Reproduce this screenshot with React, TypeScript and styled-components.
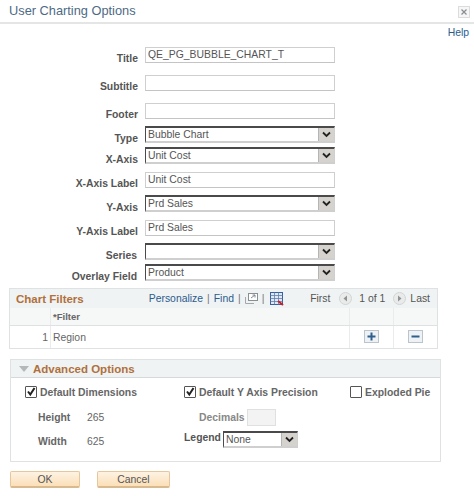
import React from "react";
import styled, { createGlobalStyle } from "styled-components";

const Global = createGlobalStyle`
  html, body { margin: 0; padding: 0; background: #fff; }
  body { font-family: "Liberation Sans", Arial, sans-serif; font-size: 10.4px; color: #555; }
`;

const Page = styled.div`
  width: 474px;
  height: 496px;
  overflow: hidden;
  display: flex;
  flex-direction: column;
`;

const TitleBar = styled.header`
  height: 22px;
  box-sizing: content-box;
  border-bottom: 2px solid #e4e6e6;
  display: flex;
  align-items: center;
  justify-content: space-between;
  padding: 0 4px 0 9px;
`;

const Heading = styled.h1`
  margin: 0 0 2px;
  font-size: 12.8px;
  font-weight: 400;
  color: #4d6a85;
`;

const CloseBox = styled.button`
  width: 12px;
  height: 12px;
  padding: 0;
  margin-top: 1px;
  border: 1px solid #dcdcdc;
  background: #f6f6f6;
  display: flex;
  align-items: center;
  justify-content: center;
`;

const HelpRow = styled.div`
  display: flex;
  justify-content: flex-end;
  padding: 3px 5px 0 0;
  height: 21px;
  box-sizing: border-box;
`;

const LinkText = styled.a`
  color: #2a5c8f;
  font-size: 10.4px;
`;

const Form = styled.div`
  display: grid;
  grid-template-columns: 138px 190px;
  column-gap: 7px;
  grid-auto-rows: auto;
  margin-top: 2px;
`;

const Label = styled.label<{ $offset?: number; $shift?: number }>`
  font-weight: 700;
  font-size: 10.4px;
  color: #555;
  text-align: right;
  align-self: end;
  margin-bottom: ${(p) => (p.$offset ?? 0) - 1}px;
  padding-right: ${(p) => p.$shift ?? 0}px;
`;

const TextField = styled.div<{ $gap: number }>`
  height: 16px;
  box-sizing: border-box;
  margin-bottom: ${(p) => p.$gap}px;
  border: 1px solid #cfcfcf;
  border-bottom-color: #c4c4c4;
  padding: 0 2px;
  font-size: 10.4px;
  line-height: 13px;
  color: #555;
  white-space: nowrap;
`;

const SelectBox = styled.div<{ $gap: number; $width?: number }>`
  height: 17px;
  width: ${(p) => (p.$width ? `${p.$width}px` : "auto")};
  box-sizing: border-box;
  margin-bottom: ${(p) => p.$gap}px;
  display: flex;
  border-top: 2px solid #4a4a4a;
  border-left: 1px solid #4a4a4a;
  border-right: 1px solid #cfcfcf;
  border-bottom: 2px solid #cfcfcf;
  font-size: 10.4px;
  font-weight: 400;
  line-height: 14px;
  color: #555;
  background: #fff;
`;

const SelectText = styled.span`
  flex: 1;
  padding-left: 2px;
  white-space: nowrap;
`;

const ArrowButton = styled.span`
  width: 15px;
  background: #d6d3ce;
  border-left: 1px solid #b5b5b5;
  display: flex;
  align-items: center;
  justify-content: center;
`;

const GridPanel = styled.section`
  margin: 7px 0 0 9px;
  width: 429px;
  height: 61px;
  box-sizing: border-box;
  border: 1px solid #dfe2e2;
  display: flex;
  flex-direction: column;
`;

const GridHeader = styled.div`
  height: 19px;
  background: #f0f3f3;
  display: flex;
  align-items: center;
  padding: 0 7px 0 6px;
`;

const PanelTitle = styled.span`
  font-size: 11.5px;
  font-weight: 700;
  color: #b0703c;
`;

const Nav = styled.div`
  margin-left: auto;
  display: flex;
  align-items: center;
  font-size: 10.4px;
  color: #555;
`;

const NavSep = styled.span`
  margin: 0 4px;
  color: #777;
`;

const Spacer = styled.span<{ $w: number }>`
  width: ${(p) => p.$w}px;
`;

const IconWrap = styled.svg`
  display: block;
  flex: none;
`;

const ColumnRow = styled.div<{ $head?: boolean }>`
  display: grid;
  grid-template-columns: 40px 1fr 44px 44px;
  height: ${(p) => (p.$head ? 17 : 23)}px;
  box-sizing: border-box;
  background: ${(p) => (p.$head ? "#f6f7f7" : "#fff")};
  border-top: ${(p) => (p.$head ? "none" : "1px solid #dfe2e2")};
`;

const Cell = styled.div<{ $align?: string; $bold?: boolean; $size?: number }>`
  display: flex;
  align-items: center;
  justify-content: ${(p) => p.$align ?? "flex-start"};
  border-left: 1px solid #eaecec;
  padding: 0 2px;
  font-weight: ${(p) => (p.$bold ? 700 : 400)};
  font-size: ${(p) => p.$size ?? 10.4}px;
  color: #666;
  &:first-child { border-left: none; }
`;

const RowButton = styled.span`
  width: 13px;
  height: 11px;
  margin-bottom: 2px;
  border: 1px solid #b9c4cc;
  background: #eef2f5;
  display: flex;
  align-items: center;
  justify-content: center;
`;

const Advanced = styled.section`
  margin: 10px 0 0 10px;
  width: 431px;
  height: 103px;
  box-sizing: border-box;
  border: 1px solid #dfe2e2;
  display: flex;
  flex-direction: column;
`;

const AdvancedHeader = styled.div`
  height: 18px;
  box-sizing: border-box;
  background: #f0f3f3;
  border-bottom: 1px solid #d5d9d9;
  display: flex;
  align-items: center;
  gap: 4px;
  padding-left: 8px;
`;

const Triangle = styled.span`
  width: 0;
  height: 0;
  border-left: 5px solid transparent;
  border-right: 5px solid transparent;
  border-top: 6px solid #b5b8ba;
`;

const OptionsGrid = styled.div`
  display: grid;
  grid-template-columns: 159px 166px auto;
  grid-template-rows: 25px 24px 24px;
  padding: 2px 0 0 14px;
`;

const CheckRow = styled.div`
  display: flex;
  align-items: center;
  gap: 3px;
  font-weight: 700;
  color: #666;
  font-size: 10.4px;
`;

const CheckBox = styled.span`
  width: 10px;
  height: 10px;
  border: 1px solid #555;
  border-radius: 1px;
  background: #fff;
  display: block;
  flex: none;
  position: relative;
  top: -1px;
`;

const Metric = styled.div`
  display: grid;
  grid-template-columns: 49px auto;
  align-items: center;
  padding-left: 13px;
  color: #666;
`;

const MetricName = styled.span`
  font-weight: 700;
`;

const DecimalRow = styled.div`
  display: flex;
  align-items: center;
  gap: 2px;
  padding-left: 15px;
  font-weight: 700;
  color: #888;
`;

const DisabledField = styled.span`
  width: 27px;
  height: 15px;
  background: #f3f3f3;
  border: 1px solid #e0e0e0;
`;

const LegendRow = styled.div`
  display: flex;
  align-items: flex-start;
  gap: 2px;
  padding-top: 2px;
  font-weight: 700;
  color: #555;
  line-height: 14px;
`;

const ButtonRow = styled.div`
  display: flex;
  gap: 17px;
  margin: 9px 0 0 10px;
`;

const ActionButton = styled.button<{ $w: number }>`
  width: ${(p) => p.$w}px;
  height: 17px;
  padding: 0;
  box-sizing: border-box;
  border: 1px solid #e6c79c;
  border-bottom: 2px solid #d9b98e;
  border-radius: 2px;
  background: linear-gradient(#fdf3e3, #fbdfb8);
  font-family: inherit;
  font-size: 10.4px;
  color: #555;
`;

const Chevron = () => (
  <IconWrap width="9" height="7" viewBox="0 0 9 7">
    <path d="M1 1.5 L4.5 5 L8 1.5" fill="none" stroke="#222" strokeWidth="1.8" />
  </IconWrap>
);

const Select = ({ text, gap, width }: { text: string; gap: number; width?: number }) => (
  <SelectBox $gap={gap} $width={width}>
    <SelectText>{text}</SelectText>
    <ArrowButton>
      <Chevron />
    </ArrowButton>
  </SelectBox>
);

const NavCircle = ({ dir }: { dir: "l" | "r" }) => (
  <IconWrap width="13" height="13" viewBox="0 0 13 13">
    <circle cx="6.5" cy="6.5" r="6" fill="#e9eaea" stroke="#d2d4d4" />
    <path d={dir === "l" ? "M8 3.5 L4.5 6.5 L8 9.5 Z" : "M5 3.5 L8.5 6.5 L5 9.5 Z"} fill="#8f9396" />
  </IconWrap>
);

const Check = ({ on }: { on: boolean }) => (
  <CheckBox>
    {on && (
      <IconWrap width="10" height="10" viewBox="0 0 10 10">
        <path d="M2 4.5 L4.3 7.5 L8.5 1" fill="none" stroke="#222" strokeWidth="2" />
      </IconWrap>
    )}
  </CheckBox>
);

export default function App() {
  return (
    <Page>
      <Global />
      <TitleBar>
        <Heading>User Charting Options</Heading>
        <CloseBox aria-label="Close">
          <IconWrap width="6" height="6" viewBox="0 0 6 6">
            <path d="M0.5 0.5 L5.5 5.5 M5.5 0.5 L0.5 5.5" stroke="#8a8f94" strokeWidth="1.3" />
          </IconWrap>
        </CloseBox>
      </TitleBar>
      <HelpRow>
        <LinkText>Help</LinkText>
      </HelpRow>
      <Form>
        <Label $offset={12}>Title</Label>
        <TextField $gap={12}>QE_PG_BUBBLE_CHART_T</TextField>
        <Label $offset={12}>Subtitle</Label>
        <TextField $gap={12}>{""}</TextField>
        <Label $offset={7}>Footer</Label>
        <TextField $gap={7}>{""}</TextField>
        <Label $offset={4}>Type</Label>
        <Select text="Bubble Chart" gap={4} />
        <Label $offset={8}>X-Axis</Label>
        <Select text="Unit Cost" gap={8} />
        <Label $offset={7}>X-Axis Label</Label>
        <TextField $gap={7}>Unit Cost</TextField>
        <Label $offset={8}>Y-Axis</Label>
        <Select text="Prd Sales" gap={8} />
        <Label $offset={7}>Y-Axis Label</Label>
        <TextField $gap={7}>Prd Sales</TextField>
        <Label $offset={4} $shift={1}>Series</Label>
        <Select text="" gap={4} />
        <Label $offset={0} $shift={1}>Overlay Field</Label>
        <Select text="Product" gap={0} />
      </Form>
      <GridPanel>
        <GridHeader>
          <PanelTitle>Chart Filters</PanelTitle>
          <Spacer $w={65} />
          <LinkText>Personalize</LinkText>
          <NavSep>|</NavSep>
          <LinkText>Find</LinkText>
          <NavSep>|</NavSep>
          <IconWrap width="13" height="11" viewBox="0 0 13 11">
            <rect x="3.5" y="0.5" width="9" height="7" fill="#fff" stroke="#8a8f94" />
            <path d="M0.5 4 V10.5 H9" fill="none" stroke="#a5a9ad" />
            <path d="M6 5 L10 2 M7.5 2 H10 V4.5" fill="none" stroke="#7f8a94" />
          </IconWrap>
          <NavSep>|</NavSep>
          <Spacer $w={2} />
          <IconWrap width="14" height="14" viewBox="0 0 14 14">
            <rect x="0.5" y="0.5" width="12" height="12" fill="#dfe8f3" stroke="#3a5f9e" />
            <path d="M0.5 3.5 H12.5 M0.5 6.5 H12.5 M0.5 9.5 H12.5 M4.5 0.5 V12.5 M8.5 0.5 V12.5" stroke="#5d7fb3" strokeWidth="0.8" />
            <path d="M8 9 L13 13" stroke="#c8202a" strokeWidth="2" />
          </IconWrap>
          <Nav>
            First
            <Spacer $w={9} />
            <NavCircle dir="l" />
            <Spacer $w={7} />
            1 of 1
            <Spacer $w={8} />
            <NavCircle dir="r" />
            <Spacer $w={4} />
            Last
          </Nav>
        </GridHeader>
        <ColumnRow $head>
          <Cell />
          <Cell $bold $size={9.5}>*Filter</Cell>
          <Cell />
          <Cell />
        </ColumnRow>
        <ColumnRow>
          <Cell $align="flex-end">1</Cell>
          <Cell>Region</Cell>
          <Cell $align="center">
            <RowButton>
              <IconWrap width="9" height="9" viewBox="0 0 9 9">
                <path d="M4.5 0.5 V8.5 M0.5 4.5 H8.5" stroke="#2f5f8f" strokeWidth="2" />
              </IconWrap>
            </RowButton>
          </Cell>
          <Cell $align="center">
            <RowButton>
              <IconWrap width="9" height="9" viewBox="0 0 9 9">
                <path d="M0.5 4.5 H8.5" stroke="#2f5f8f" strokeWidth="2" />
              </IconWrap>
            </RowButton>
          </Cell>
        </ColumnRow>
      </GridPanel>
      <Advanced>
        <AdvancedHeader>
          <Triangle />
          <PanelTitle>Advanced Options</PanelTitle>
        </AdvancedHeader>
        <OptionsGrid>
          <CheckRow><Check on />Default Dimensions</CheckRow>
          <CheckRow><Check on />Default Y Axis Precision</CheckRow>
          <CheckRow><Check on={false} />Exploded Pie</CheckRow>
          <Metric><MetricName>Height</MetricName><span>265</span></Metric>
          <DecimalRow>Decimals<DisabledField /></DecimalRow>
          <span />
          <Metric><MetricName>Width</MetricName><span>625</span></Metric>
          <LegendRow>Legend<Select text="None" gap={0} width={75} /></LegendRow>
          <span />
        </OptionsGrid>
      </Advanced>
      <ButtonRow>
        <ActionButton $w={70}>OK</ActionButton>
        <ActionButton $w={73}>Cancel</ActionButton>
      </ButtonRow>
    </Page>
  );
}
